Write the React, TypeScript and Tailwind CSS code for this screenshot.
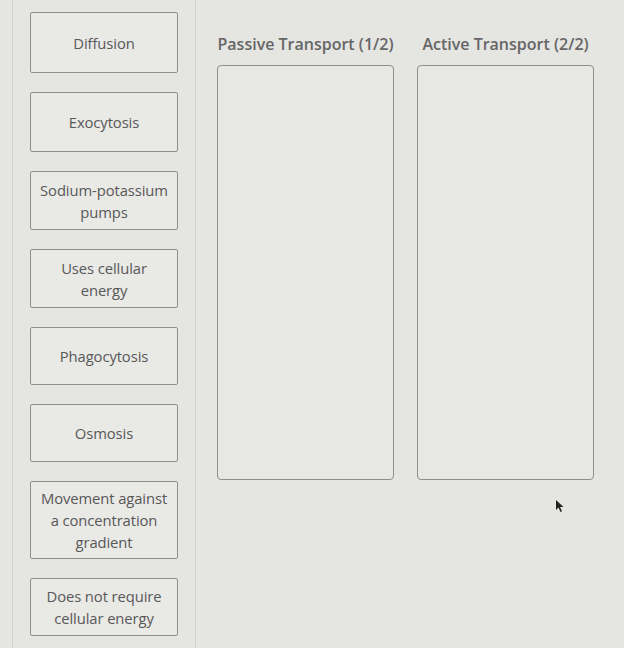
import React from "react";

const cards: { text: string[]; h: string }[] = [
  { text: ["Diffusion"], h: "h-[61px]" },
  { text: ["Exocytosis"], h: "h-[60px]" },
  { text: ["Sodium-potassium", "pumps"], h: "h-[59px]" },
  { text: ["Uses cellular", "energy"], h: "h-[59px]" },
  { text: ["Phagocytosis"], h: "h-[58px]" },
  { text: ["Osmosis"], h: "h-[58px]" },
  { text: ["Movement against", "a concentration", "gradient"], h: "h-[78px]" },
  { text: ["Does not require", "cellular energy"], h: "h-[58px]" },
];

export default function App() {
  return (
    <div
      className="relative w-[624px] h-[648px] overflow-hidden bg-[#e5e5e2] flex"
      style={{ fontFamily: "'Open Sans', Lato, sans-serif" }}
    >
      <div className="ml-[12px] w-[184px] h-full border-l border-r border-[#d2d2cf] flex flex-col items-center pt-[12px] gap-[19px]">
        {cards.map((c, i) => (
          <div
            key={i}
            className={`w-[148px] ${c.h} shrink-0 rounded-[2px] border border-[#8e8e8c] bg-[#e9e9e6] flex flex-col items-center justify-center text-[14.8px] leading-[22px] text-[#585858] text-center tracking-[-0.1px]`}
          >
            {c.text.map((t, j) => (
              <div key={j}>{t}</div>
            ))}
          </div>
        ))}
      </div>
      <div className="pl-[21px] flex gap-[23px]">
        {["Passive Transport (1/2)", "Active Transport (2/2)"].map((t, i) => (
          <div key={i} className="w-[177px] flex flex-col items-center">
            <div className="pt-[33px] h-[56px] text-[16px] leading-[22px] font-semibold text-[#666666] whitespace-nowrap">
              {t}
            </div>
            <div className="mt-[9px] w-[177px] h-[415px] rounded-[4px] border border-[#8e8e8c] bg-[#e7e7e4]" />
          </div>
        ))}
      </div>
      <svg
        className="absolute left-[555px] top-[499px]"
        width="10"
        height="14"
        viewBox="0 0 10 14"
      >
        <path d="M1 1 L1 11 L3.5 8.5 L5.5 13 L7 12.3 L5 8 L8.5 8 Z" fill="#222" />
      </svg>
    </div>
  );
}
